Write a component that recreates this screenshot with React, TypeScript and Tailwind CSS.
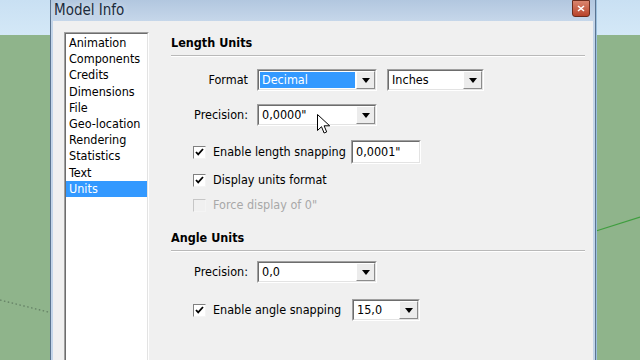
import React from "react";

const ui = "font-['DejaVu_Sans_Condensed','DejaVu_Sans',sans-serif]";

const pages = [
  "Animation",
  "Components",
  "Credits",
  "Dimensions",
  "File",
  "Geo-location",
  "Rendering",
  "Statistics",
  "Text",
  "Units",
];

function Sunken({ className, children }: { className: string; children: React.ReactNode }) {
  return (
    <div
      className={`border border-t-[#a0a0a0] border-l-[#a0a0a0] border-r-white border-b-white ${className}`}
    >
      <div className="flex h-full w-full border border-t-[#6d6d6d] border-l-[#6d6d6d] border-r-[#e3e3e3] border-b-[#e3e3e3] bg-white">
        {children}
      </div>
    </div>
  );
}

function Combo({ value, width, selected }: { value: string; width: string; selected?: boolean }) {
  return (
    <Sunken className={`h-[22px] ${width}`}>
      <div className="flex flex-1 items-center p-px">
        <div
          className={`flex h-full w-full items-center pl-[2px] ${
            selected ? "bg-[#3399ff] text-white" : "text-black"
          }`}
        >
          {value}
        </div>
      </div>
      <div className="flex w-[19px] items-center justify-center border border-t-white border-l-white border-r-[#8c8c8c] border-b-[#8c8c8c] bg-[#ececec]">
        <svg width="8" height="5" viewBox="0 0 8 5">
          <path d="M0 0h8L4 5z" fill="#000" />
        </svg>
      </div>
    </Sunken>
  );
}

function Check({ checked, disabled }: { checked?: boolean; disabled?: boolean }) {
  return (
    <div
      className={`flex h-[13px] w-[13px] shrink-0 items-center justify-center border ${
        disabled
          ? "border-t-[#c6c6c6] border-l-[#c6c6c6] border-r-[#f4f4f4] border-b-[#f4f4f4] bg-[#f0f0f0]"
          : "border-t-[#808080] border-l-[#808080] border-r-[#f4f4f4] border-b-[#f4f4f4] bg-white"
      }`}
    >
      {checked && (
        <svg width="9" height="8" viewBox="0 0 9 8">
          <path d="M1 4l2.2 2.4L8 1" fill="none" stroke="#000" strokeWidth="1.8" />
        </svg>
      )}
    </div>
  );
}

function Heading({ text }: { text: string }) {
  return (
    <>
      <div className="h-[16px] font-bold leading-[16px]">{text}</div>
      <div className="mt-[4px] h-[2px] w-[414px] border-t border-t-[#b9b9b9] border-b border-b-white" />
    </>
  );
}

function LabelRow({ label, children, className }: { label: string; children: React.ReactNode; className: string }) {
  return (
    <div className={`flex h-[22px] items-center pl-[22px] ${className}`}>
      <div className="w-[56px] pr-[1px] text-right">{label}</div>
      <div className="ml-[8px] flex items-center">{children}</div>
    </div>
  );
}

export default function App() {
  return (
    <div className={`relative flex h-[360px] w-[640px] flex-col overflow-hidden text-[12.5px] ${ui}`}>
      <div className="h-[35px] bg-gradient-to-b from-[#c9e0f3] to-[#d4e8f7]" />
      <div className="flex-1 bg-[#8fb48b]" />

      <svg className="absolute left-0 top-0" width="640" height="360">
        <line x1="0" y1="300" x2="52" y2="313" stroke="#5f7a60" strokeWidth="1.2" strokeDasharray="1.5 2.5" />
        <line x1="596" y1="231" x2="640" y2="217" stroke="#3f9e3f" strokeWidth="1.2" />
      </svg>

      <div className="absolute left-[50px] top-[-1px] flex h-[380px] w-[546px] flex-col border border-[#5b7490] bg-[#c3d5e9] shadow-[1px_0_0_#9cc0de]">
        <div className="flex h-[21px] items-center bg-gradient-to-b from-[#b2c7df] to-[#c6d7ea] pl-[3px]">
          <span className="text-[15px] leading-[21px] text-[#1b2b3c] [text-shadow:0_0_6px_rgba(255,255,255,0.6)]">
            Model Info
          </span>
          <div className="ml-auto mr-[5px] flex h-[17px] w-[18px] items-center justify-center self-start rounded-b-[3px] border border-[#6b2b1c] bg-gradient-to-b from-[#d9846d] to-[#b8432a]">
            <svg width="8" height="7" viewBox="0 0 8 7">
              <path d="M1 1l6 5M7 1L1 6" stroke="#fff" strokeWidth="1.6" />
            </svg>
          </div>
        </div>

        <div className="mx-[2px] flex flex-1 items-start bg-[#f0f0f0] pl-[11px] pt-[11px] text-black">
          <Sunken className="h-[340px] w-[85px]">
            <div className="flex w-full flex-col pt-[1px] leading-[16.2px]">
              {pages.map((p) => (
                <div
                  key={p}
                  className={`pl-[3px] ${p === "Units" ? "bg-[#3399ff] text-white" : "text-black"}`}
                >
                  {p}
                </div>
              ))}
            </div>
          </Sunken>

          <div className="ml-[22px] flex flex-col pt-[3px]">
            <Heading text="Length Units" />

            <LabelRow label="Format" className="mt-[12px]">
              <Combo value="Decimal" width="w-[120px]" selected />
              <div className="ml-[10px]">
                <Combo value="Inches" width="w-[97px]" />
              </div>
            </LabelRow>

            <LabelRow label="Precision:" className="mt-[13px]">
              <Combo value={'0,0000"'} width="w-[120px]" />
            </LabelRow>

            <div className="mt-[14px] flex h-[24px] items-center pl-[22px]">
              <Check checked />
              <span className="ml-[7px] w-[138px]">Enable length snapping</span>
              <Sunken className="h-[24px] w-[70px]">
                <div className="flex items-center pl-[3px]">0,0001"</div>
              </Sunken>
            </div>

            <div className="mt-[8px] flex h-[16px] items-center pl-[22px]">
              <Check checked />
              <span className="ml-[7px]">Display units format</span>
            </div>

            <div className="mt-[9px] flex h-[16px] items-center pl-[22px]">
              <Check disabled />
              <span className="ml-[7px] text-[#a8a8a8]">Force display of 0"</span>
            </div>

            <div className="mt-[17px]">
              <Heading text="Angle Units" />
            </div>

            <LabelRow label="Precision:" className="mt-[9px]">
              <Combo value="0,0" width="w-[120px]" />
            </LabelRow>

            <div className="mt-[16px] flex h-[22px] items-center pl-[22px]">
              <Check checked />
              <span className="ml-[7px] w-[139px]">Enable angle snapping</span>
              <Combo value="15,0" width="w-[68px]" />
            </div>
          </div>
        </div>
      </div>

      <svg className="absolute left-[317px] top-[114px]" width="13" height="21" viewBox="0 0 13 21">
        <path
          d="M0.5 0.5v16l4-3.8 2.6 6.3 2.6-1.1-2.6-6.1h5.6z"
          fill="#fff"
          stroke="#000"
          strokeWidth="1"
          strokeLinejoin="round"
        />
      </svg>
    </div>
  );
}
